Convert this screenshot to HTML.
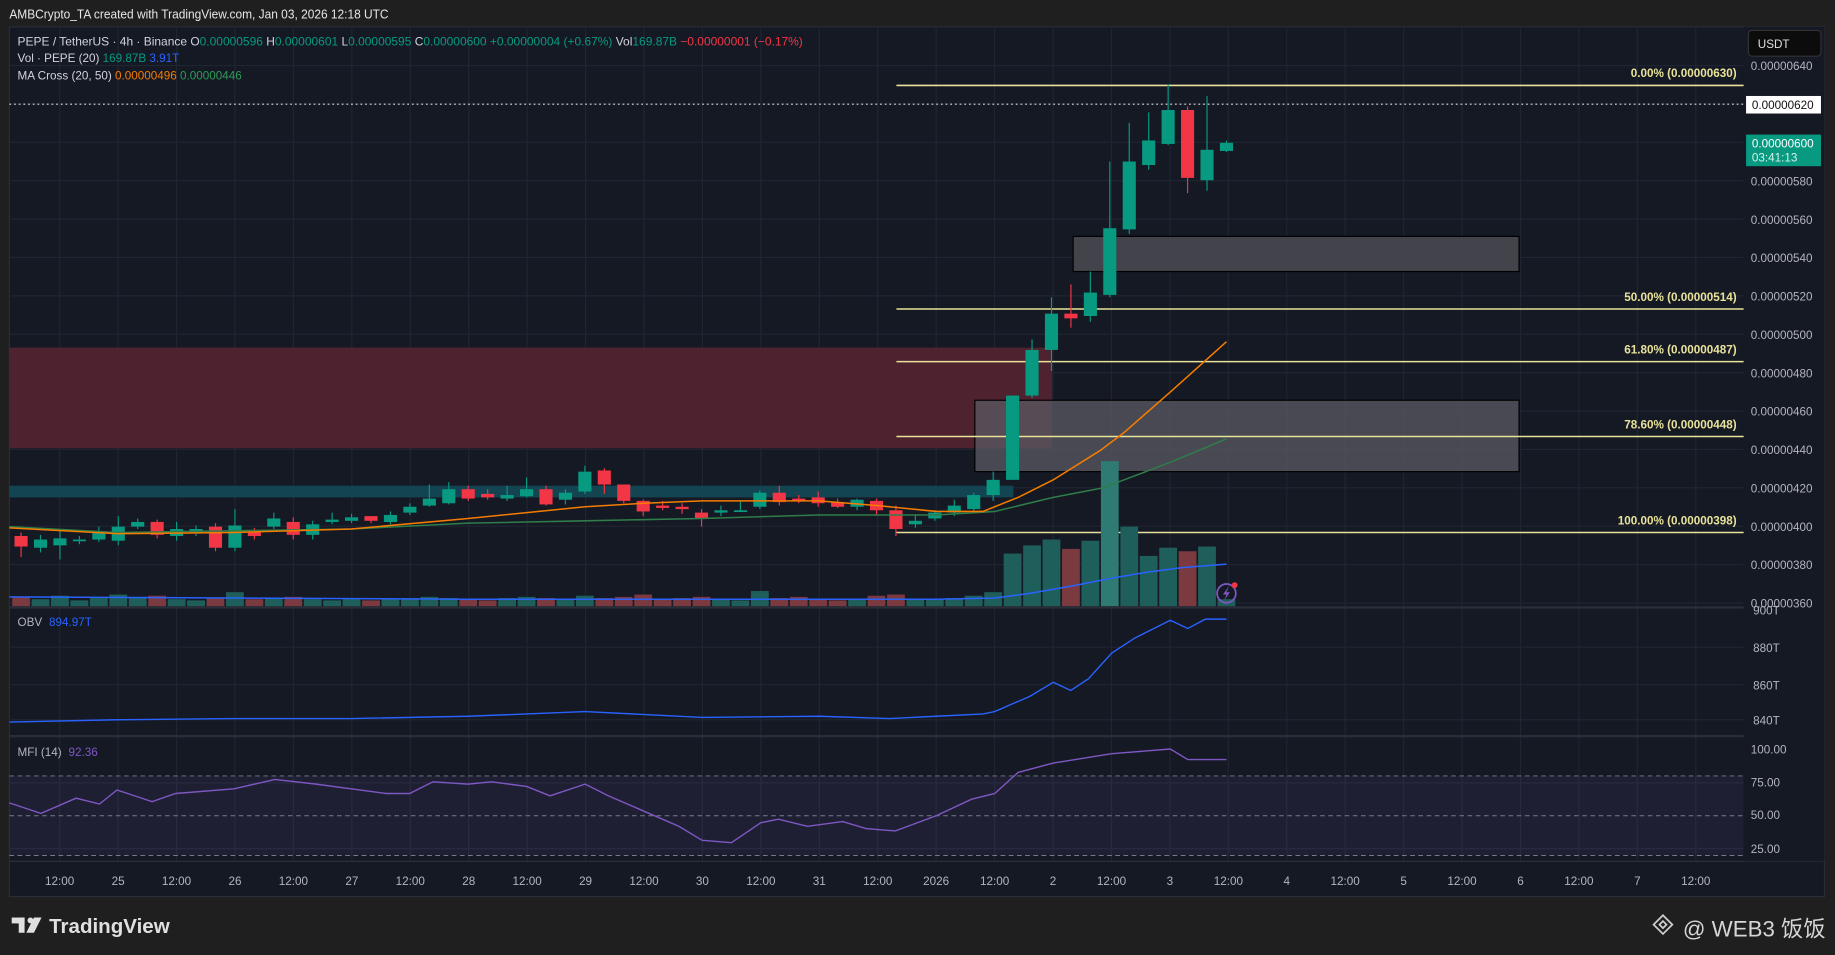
<!DOCTYPE html>
<html><head><meta charset="utf-8"><style>
html,body{margin:0;padding:0;background:#1e1e1e;width:1835px;height:955px;overflow:hidden}
svg{display:block}
text{font-family:"Liberation Sans",sans-serif}
</style></head><body>
<svg id="s" width="1835" height="955" viewBox="0 0 1568 816" preserveAspectRatio="none" xmlns="http://www.w3.org/2000/svg">
<rect x="0" y="0" width="1568" height="816" fill="#1f1f1f"/>
<text x="8" y="16" font-size="11" fill="#e6e6e6" textLength="324" lengthAdjust="spacingAndGlyphs">AMBCrypto_TA created with TradingView.com, Jan 03, 2026 12:18 UTC</text>
<rect x="8" y="23" width="1551" height="743" fill="#151924" stroke="#2a2e39" stroke-width="1"/>
<g id="grid"></g>
<rect x="8" y="297" width="891" height="86" fill="#4f2230"/>
<rect x="8" y="415" width="858" height="10" fill="#134452"/>
<rect x="917" y="202" width="381" height="30" fill="#42434b" stroke="#000" stroke-width="1"/>
<rect x="833" y="342" width="465" height="61" fill="#5a5a62" fill-opacity="0.75" stroke="#000" stroke-width="1"/>
<g stroke="#e8e29a" stroke-width="1.3">
<line x1="766" y1="73" x2="1490" y2="73"/>
<line x1="766" y1="264" x2="1490" y2="264"/>
<line x1="766" y1="309" x2="1490" y2="309"/>
<line x1="766" y1="373" x2="1490" y2="373"/>
<line x1="766" y1="455" x2="1490" y2="455"/>
</g>
<g font-size="10" fill="#e8e29a" font-weight="bold" text-anchor="end">
<text x="1484" y="66">0.00% (0.00000630)</text>
<text x="1484" y="257">50.00% (0.00000514)</text>
<text x="1484" y="302">61.80% (0.00000487)</text>
<text x="1484" y="366">78.60% (0.00000448)</text>
<text x="1484" y="448">100.00% (0.00000398)</text>
</g>
<line x1="8" y1="89" x2="1490" y2="89" stroke="#ddd" stroke-width="1" stroke-dasharray="1.5,2.5"/>
<g id="vol"></g>
<g id="cd"></g>
<polyline fill="none" stroke="#2962ff" stroke-width="1.3" points="8,510 200,511 400,512 600,512 800,512 850,511 880,507 920,500 950,494 980,489 1010,485 1048,482"/>
<polyline fill="none" stroke="#2e7d4a" stroke-width="1.3" points="8,450 100,455 300,452 400,447 500,445 600,443 700,440 800,440 850,437 900,425 942,417 1000,395 1048,375"/>
<polyline fill="none" stroke="#f57c00" stroke-width="1.3" points="8,451 100,456 200,455 300,452 400,443 500,433 550,430 600,428 700,428 750,432 800,437 840,437 870,425 900,410 940,385 960,370 1000,335 1048,292"/>
<circle cx="1048" cy="507" r="8" fill="none" stroke="#7e57c2" stroke-width="1.5"/>
<path d="M1050,501 L1045,508 L1048,508 L1046,513 L1051,506 L1048,506 Z" fill="#7e57c2"/>
<circle cx="1055" cy="500" r="2.5" fill="#f23645"/>
<line x1="8" y1="519" x2="1558" y2="519" stroke="#2a2e39" stroke-width="2"/>
<line x1="8" y1="629" x2="1558" y2="629" stroke="#2a2e39" stroke-width="2"/>
<line x1="8" y1="736" x2="1558" y2="736" stroke="#2a2e39" stroke-width="1"/>
<polyline fill="none" stroke="#2962ff" stroke-width="1.2" points="8,617 100,615 200,614 300,614 400,612 500,608 600,613 700,612 760,614 800,612 840,610 850,608 880,595 900,583 915,590 930,580 950,558 970,545 1000,530 1015,537 1030,529 1048,529"/>
<text x="15" y="535" font-size="10" fill="#b2b5be">OBV <tspan fill="#2962ff" dx="3">894.97T</tspan></text>
<rect x="8" y="663" width="1482" height="68" fill="#7e57c2" fill-opacity="0.1"/>
<g stroke="#787b86" stroke-width="0.8" stroke-dasharray="4,3">
<line x1="8" y1="663" x2="1490" y2="663"/><line x1="8" y1="697" x2="1490" y2="697"/><line x1="8" y1="731" x2="1490" y2="731"/></g>
<polyline fill="none" stroke="#7e57c2" stroke-width="1.2" points="8,686 35,695 65,682 85,687 100,675 130,685 150,678 200,674 235,666 270,670 300,674 330,678 350,678 370,668 400,670 420,668 450,672 470,680 500,670 520,680 550,693 580,706 600,718 625,720 650,703 665,700 690,706 720,702 740,708 765,710 800,697 830,683 850,678 870,660 900,652 950,644 1000,640 1015,649 1048,649"/>
<text x="15" y="646" font-size="10" fill="#b2b5be">MFI (14) <tspan fill="#7e57c2" dx="3">92.36</tspan></text>
<rect x="1490" y="23" width="69" height="713" fill="#151924"/>
<rect x="1494" y="26" width="62" height="22" rx="3" fill="#0c0c0c" stroke="#333"/>
<text x="1502" y="41" font-size="10" fill="#e0e0e0">USDT</text>
<g id="ax" font-size="10" fill="#b2b5be"></g>
<rect x="1492" y="82" width="64" height="15" fill="#fff"/>
<text x="1497" y="93" font-size="10" fill="#111">0.00000620</text>
<rect x="1492" y="115" width="64" height="27" fill="#089981"/>
<text x="1497" y="126" font-size="10" fill="#fff">0.00000600</text>
<text x="1497" y="138" font-size="10" fill="#d8f0ea">03:41:13</text>
<g font-size="10" fill="#b2b5be">
<text x="1498" y="525">900T</text><text x="1498" y="557">880T</text><text x="1498" y="589">860T</text><text x="1498" y="619">840T</text>
<text x="1496" y="644">100.00</text><text x="1496" y="672">75.00</text><text x="1496" y="700">50.00</text><text x="1496" y="729">25.00</text>
</g>
<g id="tx" font-size="10" fill="#b2b5be" text-anchor="middle"></g>
<g font-size="10" fill="#d1d4dc">
<text x="15" y="39" textLength="671" lengthAdjust="spacingAndGlyphs">PEPE / TetherUS · 4h · Binance  O<tspan fill="#089981">0.00000596</tspan>  H<tspan fill="#089981">0.00000601</tspan>  L<tspan fill="#089981">0.00000595</tspan>  C<tspan fill="#089981">0.00000600</tspan> <tspan fill="#089981"> +0.00000004 (+0.67%)</tspan>  Vol<tspan fill="#089981">169.87B</tspan> <tspan fill="#f23645"> −0.00000001 (−0.17%)</tspan></text>
<text x="15" y="53">Vol · PEPE (20)  <tspan fill="#089981">169.87B</tspan>  <tspan fill="#2962ff">3.91T</tspan></text>
<text x="15" y="68">MA Cross (20, 50)  <tspan fill="#f57c00">0.00000496</tspan>  <tspan fill="#2e9b58">0.00000446</tspan></text>
</g>
<g fill="#e0e0e0">
<rect x="10" y="784" width="11" height="5"/><rect x="16" y="784" width="5" height="13"/>
<circle cx="26" cy="786.5" r="2.5"/>
<path d="M29,784 L35.5,784 L29,797 L22.5,797 Z"/>
</g>
<text x="42" y="797" font-size="17" font-weight="bold" fill="#e0e0e0" textLength="103" lengthAdjust="spacingAndGlyphs">TradingView</text>
<g transform="translate(1421,793)" fill="none" stroke="#cfcfcf" stroke-width="1.5"><path d="M0,-11 L8,-3 L0,5 L-8,-3 Z M0,-6 L3,-3 L0,0 L-3,-3 Z"/></g>
<text x="1438" y="800" font-size="19" fill="#d6d6d6" textLength="122" lengthAdjust="spacingAndGlyphs" font-family="Liberation Sans, Noto Sans CJK SC, sans-serif">@ WEB3 饭饭</text>
</svg>
<script>
const NS="http://www.w3.org/2000/svg";
function el(p,t,a,txt){const e=document.createElementNS(NS,t);for(const k in a)e.setAttribute(k,a[k]);if(txt)e.textContent=txt;document.getElementById(p).appendChild(e);return e;}
const tl=["12:00","25","12:00","26","12:00","27","12:00","28","12:00","29","12:00","30","12:00","31","12:00","2026","12:00","2","12:00","3","12:00","4","12:00","5","12:00","6","12:00","7","12:00"];
tl.forEach((t,i)=>{const x=51+i*49.93;el("grid","line",{x1:x,y1:24,x2:x,y2:736,stroke:"#202532","stroke-width":1});el("tx","text",{x:x,y:756},t);});
const pv=[640,620,600,580,560,540,520,500,480,460,440,420,400,380,360];
pv.forEach((p,i)=>{const y=56+i*32.8;el("grid","line",{x1:8,y1:y,x2:1490,y2:y,stroke:"#202532","stroke-width":1});if(p!=620&&p!=600)el("ax","text",{x:1496,y:y+4},"0.00000"+p);});
[553,585,615,669,725].forEach(y=>el("grid","line",{x1:8,y1:y,x2:1490,y2:y,stroke:"#202532","stroke-width":1}));
const C=[[458,467,455,476],[468,461,457,472],[466,460,452,478],[461,461,458,465],[461,455,450,463],[462,450,441,466],[450,446,443,452],[446,457,444,460],[458,452,446,462],[455,452,449,458],[450,468,447,471],[468,449,435,471],[455,458,451,461],[450,443,438,452],[446,457,442,461],[457,448,445,461],[446,444,438,448],[445,442,439,447],[441,445,441,447],[446,440,437,448],[438,433,430,440],[432,426,414,433],[430,418,412,431],[418,426,415,428],[422,425,418,427],[426,423,415,428],[424,418,408,425],[418,431,415,432],[427,421,418,431],[420,403,398,422],[402,414,400,422],[414,428,414,430],[428,437,427,441],[432,434,428,436],[433,435,430,439],[438,443,435,450],[438,436,432,441],[437,436,428,437],[433,421,419,435],[421,429,415,432],[426,428,423,430],[425,430,420,433],[429,433,426,434],[433,427,426,436],[428,436,426,440],[436,452,432,458],[448,445,440,451],[443,438,436,445],[438,432,427,441],[435,423,421,437],[423,410,403,428],[410,338,338,410],[338,299,290,340],[299,268,254,317],[268,272,243,280],[270,250,232,275],[252,195,138,254],[196,138,105,200],[141,120,96,145],[123,94,72,124],[94,152,91,165],[154,128,82,163],[129,122,120,130]];
const V=[8,6,9,5,7,10,8,9,6,5,7,12,6,7,8,6,5,6,5,6,7,8,7,6,5,7,8,7,6,9,7,8,10,6,7,8,6,5,13,7,8,6,5,6,9,10,6,6,7,9,12,45,52,57,49,56,124,68,43,50,47,51];
const s=(1048-18)/62;
C.forEach((c,i)=>{const x=18+i*s;const up=c[1]<=c[0];const col=up?"#089981":"#f23645";
 const vh=V[i]||6;const vt=518-vh;el("vol","rect",{x:x-7.6,y:vt,width:15.2,height:vh,fill:i==56?"#2f7a72":(up?"#1f5f5b":"#7a3a40")});
 el("cd","line",{x1:x,y1:c[2],x2:x,y2:c[3],stroke:col,"stroke-width":1});
 const t=Math.min(c[0],c[1]),h=Math.max(1.5,Math.abs(c[0]-c[1]));el("cd","rect",{x:x-5.6,y:t,width:11.2,height:h,fill:col});});
</script>
</body></html>
